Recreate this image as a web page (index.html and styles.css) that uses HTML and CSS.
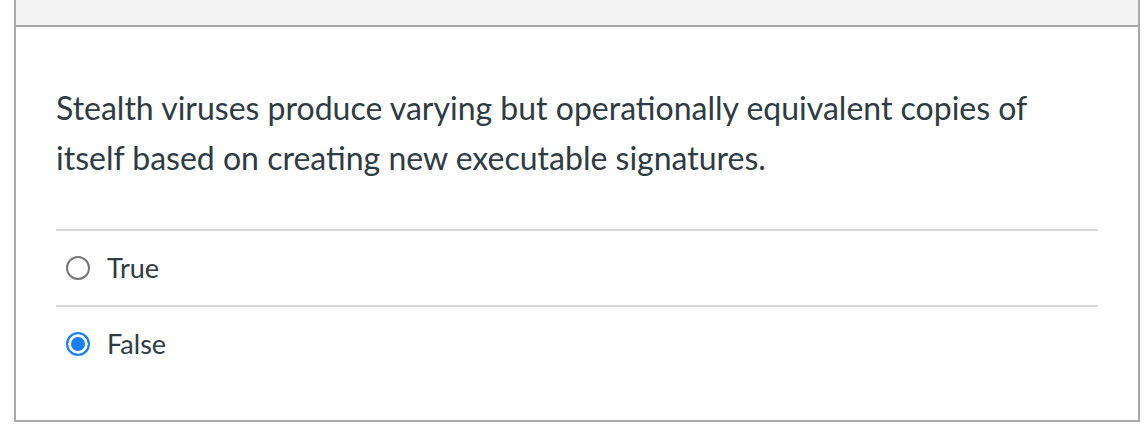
FILE: index.html
```html
<!DOCTYPE html>
<html>
<head>
<meta charset="utf-8">
<link rel="stylesheet" href="styles.css">
</head>
<body>
<div class="question">
  <div class="q-header"></div>
  <div class="q-body">
    <p class="q-text">Stealth viruses produce varying but operationally equivalent copies of itself based on creating new executable signatures.</p>
    <div class="answers">
      <label class="answer">
        <span class="radio"></span>
        <span class="answer-label">True</span>
      </label>
      <label class="answer">
        <span class="radio checked"></span>
        <span class="answer-label">False</span>
      </label>
    </div>
  </div>
</div>
</body>
</html>
```

FILE: styles.css
```css
html, body {
  margin: 0;
  padding: 0;
  background: #ffffff;
}
body {
  font-family: Lato, "Liberation Sans", sans-serif;
  color: #2d3b45;
}
.question {
  margin-left: 14px;
  width: 1122px;
  border: 2px solid #aaaaaa;
  border-top: none;
}
.q-header {
  height: 25px;
  background: #f4f4f4;
  border-bottom: 2px solid #aaaaaa;
}
.q-body {
  padding: 56px 40px 39px 40px;
}
.q-text {
  margin: 0;
  font-size: 32px;
  line-height: 50px;
  width: 1000px;
}
.answers {
  margin-top: 46px;
  border-top: 2px solid #d9d9d9;
}
.answer {
  display: flex;
  align-items: center;
  height: 74px;
  padding-left: 10px;
}
.answer + .answer {
  border-top: 2px solid #d9d9d9;
}
.radio {
  box-sizing: border-box;
  width: 24px;
  height: 24px;
  border-radius: 50%;
  border: 2px solid #777777;
  background: #ffffff;
  flex: none;
}
.radio.checked {
  border: 2px solid #1b7ff0;
  box-shadow: inset 0 0 0 3px #ffffff;
  background: #1b7ff0;
}
.answer-label {
  margin-left: 17px;
  font-size: 27px;
  margin-top: -2px;
}
```
